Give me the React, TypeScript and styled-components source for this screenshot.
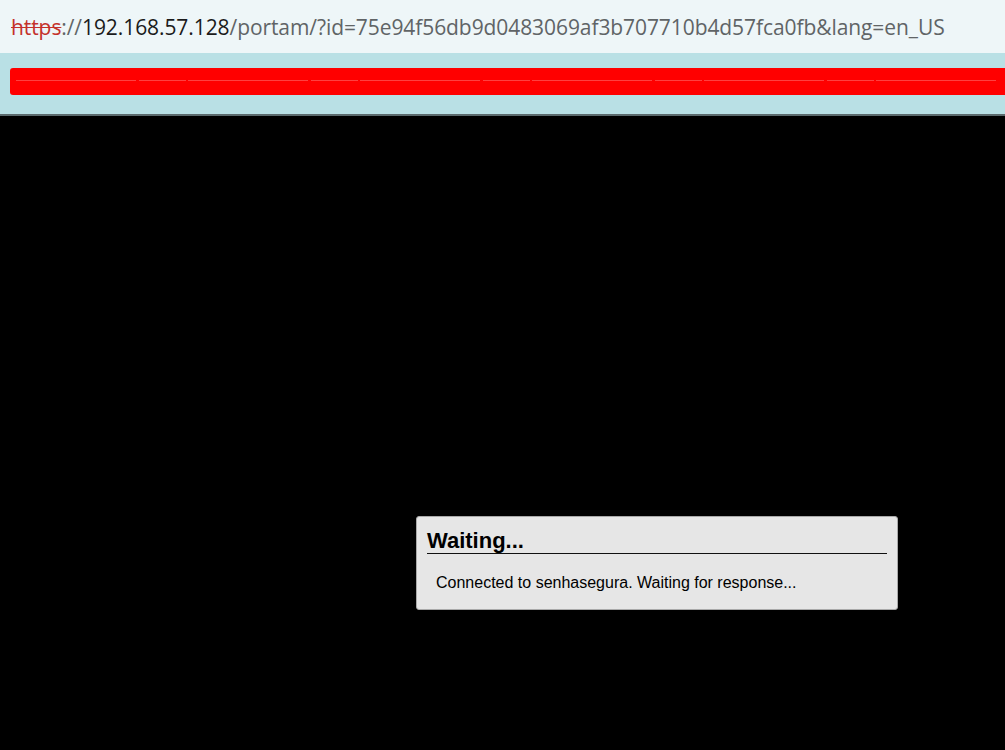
import React from 'react';
import styled, { createGlobalStyle } from 'styled-components';

const GlobalStyle = createGlobalStyle`
  html, body {
    margin: 0;
    padding: 0;
    background: #000;
  }
  #root {
    min-height: 750px;
  }
`;

const Page = styled.div`
  width: 1005px;
  height: 750px;
  display: flex;
  flex-direction: column;
  background: #000;
  overflow: hidden;
`;

const AddressBar = styled.div`
  height: 53px;
  background: #eef6f8;
  display: flex;
  align-items: center;
  padding-left: 11px;
  box-sizing: border-box;
  font-family: 'Open Sans', 'Noto Sans', sans-serif;
  font-size: 21px;
  letter-spacing: -0.08px;
  color: #606466;
  white-space: nowrap;
`;

const Scheme = styled.span`
  color: #c4312b;
  text-decoration: line-through;
  text-decoration-thickness: 1px;
`;

const Host = styled.span`
  color: #1b1b1b;
`;

const Banner = styled.div`
  height: 63px;
  background: #b9e0e5;
  border-bottom: 2px solid #5b6a6d;
  display: flex;
  align-items: center;
  padding-left: 10px;
  box-sizing: border-box;
  padding-bottom: 4px;
`;

const Redaction = styled.div`
  flex: 1;
  height: 27px;
  background: #ff0000;
  border-radius: 3px 0 0 3px;
  display: flex;
  align-items: center;
  padding: 0 6px;
`;

const RedactionLine = styled.div`
  flex: 1;
  height: 1px;
  background: repeating-linear-gradient(
    90deg,
    rgba(255, 160, 160, 0.4) 0 120px,
    transparent 120px 123px,
    rgba(255, 160, 160, 0.4) 123px 170px,
    transparent 170px 172px
  );
  margin-top: -3px;
`;

const Screen = styled.div`
  flex: 1;
  display: flex;
  align-items: flex-start;
  padding-top: 400px;
  padding-left: 416px;
`;

const Dialog = styled.div`
  width: 482px;
  height: 94px;
  box-sizing: border-box;
  background: #e6e6e6;
  border: 1px solid #a9a9a9;
  border-radius: 3px;
  padding: 11px 10px 0 10px;
  font-family: 'Liberation Sans', Arial, sans-serif;
  color: #000;
`;

const Title = styled.div`
  font-size: 22px;
  font-weight: bold;
  line-height: 25px;
  border-bottom: 1.5px solid #111;
`;

const Message = styled.div`
  font-size: 16px;
  padding: 20px 0 0 9px;
`;

export default function App() {
  return (
    <Page>
      <GlobalStyle />
      <AddressBar>
        <Scheme>https</Scheme>://<Host>192.168.57.128</Host>/portam/?id=75e94f56db9d0483069af3b707710b4d57fca0fb&amp;lang=en_US
      </AddressBar>
      <Banner>
        <Redaction>
          <RedactionLine />
        </Redaction>
      </Banner>
      <Screen>
        <Dialog>
          <Title>Waiting...</Title>
          <Message>Connected to senhasegura. Waiting for response...</Message>
        </Dialog>
      </Screen>
    </Page>
  );
}
